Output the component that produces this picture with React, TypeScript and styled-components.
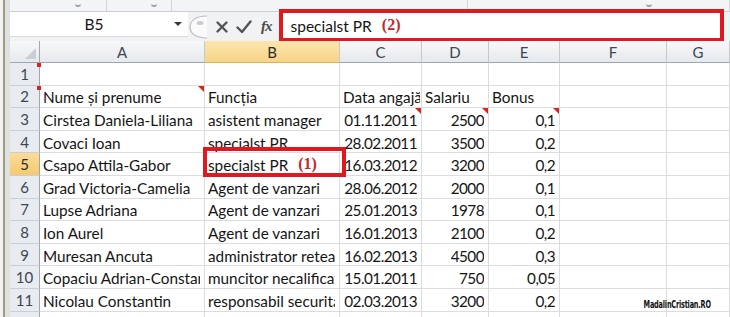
import React from 'react'
import styled, { createGlobalStyle, css } from 'styled-components'

const GlobalStyle = createGlobalStyle`
  html, body {
    margin: 0;
    padding: 0;
    background: #ffffff;
    overflow: hidden;
  }
  * { box-sizing: border-box; }
`

const GRID = '#dadcdf'
const HEAD_LINE = '#c3c9d1'
const RED = '#e0191f'

const Window = styled.div`
  display: flex;
  width: 730px;
  height: 317px;
  overflow: hidden;
  background: #ffffff;
  font-family: Lato, 'Open Sans', sans-serif;
  color: #151515;
`

const WindowEdge = styled.div`
  width: 10px;
  flex: none;
  border-left: 3px solid #f2f2f2;
  background: #dfe0e0;
  box-shadow: inset 2px 0 0 #a39a82;
`

const Workspace = styled.div`
  flex: 1;
  display: flex;
  flex-direction: column;
  position: relative;
  min-width: 0;
`

const RibbonTail = styled.div`
  flex: none;
  height: 12px;
  display: flex;
  background: #f3f4f5;
  border-bottom: 1px solid #cbced2;
`

const RibbonGroup = styled.div<{ $w?: number }>`
  ${p => (p.$w ? `width: ${p.$w}px;` : 'flex: 1;')}
  border-right: 1px solid #d4d6d9;
  display: flex;
  justify-content: center;
  align-items: flex-start;
`

const LabelTail = styled.span<{ $shift: number }>`
  margin-left: ${p => p.$shift}px;
  margin-top: 3px;
  width: 6px;
  height: 4px;
  border-bottom: 2px solid #a0a0a0;
  border-radius: 0 0 3px 3px;
`

const FormulaBar = styled.div`
  flex: none;
  height: 29px;
  display: flex;
  align-items: stretch;
  background: #f1f2f3;
`

const NameBox = styled.div`
  width: 178px;
  margin: 0 0 4px 0;
  background: #ffffff;
  display: flex;
  align-items: center;
  font-size: 15.5px;
  border-bottom: 1px solid #d9dcdf;
`

const NameText = styled.span`
  flex: 1;
  text-align: center;
  padding-left: 4px;
`

const DropArrow = styled.span`
  width: 0;
  height: 0;
  margin-right: 6px;
  border-left: 4px solid transparent;
  border-right: 4px solid transparent;
  border-top: 4px solid #3a3a3a;
`

const Tools = styled.div`
  display: flex;
  align-items: center;
  gap: 7px;
  padding: 0 4px 0 0;
`

const ToolIcon = styled.svg`
  display: block;
  flex: none;
`

const FxGlyph = styled.span`
  font-family: 'Liberation Serif', serif;
  font-style: italic;
  font-weight: bold;
  font-size: 15px;
  color: #4a4a4a;
  letter-spacing: -1px;
  margin-left: 2px;
`

const FormulaInput = styled.div`
  flex: 1;
  margin: -3px 6px -1px 3px;
  border: 4px solid ${RED};
  background: #ffffff;
  display: flex;
  align-items: center;
  padding-left: 8px;
  font-size: 15.5px;
`

const Annotation = styled.span<{ $gap: number }>`
  font-family: 'Liberation Serif', serif;
  font-weight: bold;
  font-size: 16px;
  color: #bf2a2e;
  margin-left: ${p => p.$gap}px;
  flex: none;
  position: relative;
  top: -1px;
  letter-spacing: 0;
`

const Sheet = styled.div`
  flex: none;
  display: grid;
  grid-template-columns: 30px 165px 135px 82px 67px 71px 107px 1fr;
  grid-template-rows: 22px;
  grid-auto-rows: 22.6px;
  font-size: 15.3px;
`

const headerBase = css`
  display: flex;
  align-items: center;
  justify-content: center;
  color: #3d4654;
  font-size: 15px;
  background: linear-gradient(#f7f8f9, #e6e9ed);
  border-right: 1px solid ${HEAD_LINE};
  border-bottom: 1px solid ${HEAD_LINE};
`

const Corner = styled.div`
  ${headerBase};
  position: relative;
  border-right-color: #9da7b3;
  border-bottom-color: #9da7b3;
  &::after {
    content: '';
    position: absolute;
    right: 3px;
    bottom: 3px;
    border-left: 11px solid transparent;
    border-bottom: 11px solid #c9ced5;
  }
`

const ColHead = styled.div<{ $active?: boolean }>`
  ${headerBase};
  border-bottom-color: #9da7b3;
  ${p =>
    p.$active &&
    css`
      background: linear-gradient(#fce6ad, #f7d488);
      color: #2b2b2b;
      border-bottom-color: #e3b04f;
    `}
`

const RowHead = styled.div<{ $active?: boolean }>`
  ${headerBase};
  position: relative;
  background: #e8ebef;
  border-right-color: #9da7b3;
  border-bottom-color: #c9cfd7;
  ${p =>
    p.$active &&
    css`
      background: linear-gradient(#fbdc98, #f6c970);
      color: #2b2b2b;
    `}
`

const Cell = styled.div<{ $num?: boolean; $note?: boolean }>`
  position: relative;
  display: flex;
  align-items: center;
  min-width: 0;
  padding: 2px 4px 0 3px;
  white-space: nowrap;
  border-right: 1px solid ${GRID};
  border-bottom: 1px solid ${GRID};
  justify-content: flex-start;
  ${p =>
    p.$num &&
    css`
      justify-content: flex-end;
      font-variant-numeric: tabular-nums;
      letter-spacing: -0.55px;
    `}
  ${p =>
    p.$note &&
    css`
      &::after {
        content: '';
        position: absolute;
        top: 0;
        right: 0;
        border-left: 6px solid transparent;
        border-top: 6px solid #d9231f;
      }
    `}
`

const CellText = styled.span`
  min-width: 0;
  overflow: hidden;
`

const ClipText = styled.span`
  flex: 1;
  min-width: 0;
  overflow: hidden;
  margin-right: -3px;
`

const SelectionMark = styled.div`
  position: absolute;
  left: -2px;
  top: -6px;
  right: -7px;
  bottom: -2px;
  border: 4px solid ${RED};
  pointer-events: none;
  z-index: 2;
`

const EdgeMark = styled.span`
  position: absolute;
  right: -2px;
  top: 0;
  width: 4px;
  height: 4px;
  background: #d9231f;
`

const Watermark = styled.div`
  position: absolute;
  right: 19px;
  bottom: 7px;
  font-family: 'DejaVu Sans Condensed', 'DejaVu Sans', sans-serif;
  font-weight: bold;
  font-size: 11px;
  line-height: 11px;
  letter-spacing: -0.3px;
  color: #111111;
  transform: scaleX(0.66);
  transform-origin: right center;
`

type Row = [string, string, string, string, string]

const rows: Row[] = [
  ['', '', '', '', ''],
  ['Nume și prenume', 'Funcția', 'Data angajării', 'Salariu', 'Bonus'],
  ['Cirstea Daniela-Liliana', 'asistent manager', '01.11.2011', '2500', '0,1'],
  ['Covaci Ioan', 'specialst PR', '28.02.2011', '3500', '0,2'],
  ['Csapo Attila-Gabor', 'specialst PR', '16.03.2012', '3200', '0,2'],
  ['Grad Victoria-Camelia', 'Agent de vanzari', '28.06.2012', '2000', '0,1'],
  ['Lupse Adriana', 'Agent de vanzari', '25.01.2013', '1978', '0,1'],
  ['Ion Aurel', 'Agent de vanzari', '16.01.2013', '2100', '0,2'],
  ['Muresan Ancuta', 'administrator retea', '16.02.2013', '4500', '0,3'],
  ['Copaciu Adrian-Constantin', 'muncitor necalificat', '15.01.2011', '750', '0,05'],
  ['Nicolau Constantin', 'responsabil securitate', '02.03.2013', '3200', '0,2'],
  ['', '', '', '', ''],
]

const columns = ['A', 'B', 'C', 'D', 'E', 'F', 'G']

const hasNote = (r: number, c: number) =>
  (r === 2 && c === 0) || (r === 3 && (c === 2 || c === 3 || c === 4))

const App: React.FC = () => {
  return (
    <Window>
      <GlobalStyle />
      <WindowEdge />
      <Workspace>
        <RibbonTail>
          <RibbonGroup $w={97}>
            <LabelTail $shift={40} />
          </RibbonGroup>
          <RibbonGroup $w={65}>
            <LabelTail $shift={30} />
          </RibbonGroup>
          <RibbonGroup $w={296} />
          <RibbonGroup>
            <LabelTail $shift={100} />
          </RibbonGroup>
        </RibbonTail>

        <FormulaBar>
          <NameBox>
            <NameText>B5</NameText>
            <DropArrow />
          </NameBox>
          <Tools>
            <ToolIcon width="20" height="26" viewBox="0 0 20 26">
              <path d="M19 2 C6 2 2 8 2 13 C2 18 6 24 19 24" fill="#fafafa" stroke="#b9bcc0" strokeWidth="1.2" />
              <ellipse cx="12" cy="9" rx="3.5" ry="2" fill="#c9ccd0" />
            </ToolIcon>
            <ToolIcon width="14" height="14" viewBox="0 0 14 14">
              <path d="M2.5 2.5 L11.5 11.5 M11.5 2.5 L2.5 11.5" stroke="#555" strokeWidth="2.4" strokeLinecap="round" />
            </ToolIcon>
            <ToolIcon width="16" height="14" viewBox="0 0 16 14">
              <path d="M1.5 7.5 L6 12 L14.5 1.5" fill="none" stroke="#555" strokeWidth="2.4" strokeLinejoin="round" strokeLinecap="round" />
            </ToolIcon>
            <FxGlyph>fx</FxGlyph>
          </Tools>
          <FormulaInput>
            specialst PR
            <Annotation $gap={10}>(2)</Annotation>
          </FormulaInput>
        </FormulaBar>

        <Sheet>
          <Corner />
          {columns.map(c => (
            <ColHead key={c} $active={c === 'B'}>
              {c}
            </ColHead>
          ))}
          {rows.map((row, r) => {
            const n = r + 1
            return (
              <React.Fragment key={n}>
                <RowHead $active={n === 5}>
                  {n}
                  {(n === 1 || n === 2) && <EdgeMark />}
                </RowHead>
                {row.map((v, c) => (
                  <Cell key={c} $num={n > 2 && c >= 2} $note={hasNote(n, c)}>
                    {n === 2 && c === 2 ? <ClipText>{v}</ClipText> : <CellText>{v}</CellText>}
                    {n === 5 && c === 1 && (
                      <>
                        <Annotation $gap={10}>(1)</Annotation>
                        <SelectionMark />
                      </>
                    )}
                  </Cell>
                ))}
                <Cell />
                <Cell />
              </React.Fragment>
            )
          })}
        </Sheet>
        <Watermark>MadalinCristian.RO</Watermark>
      </Workspace>
    </Window>
  )
}

export default App
